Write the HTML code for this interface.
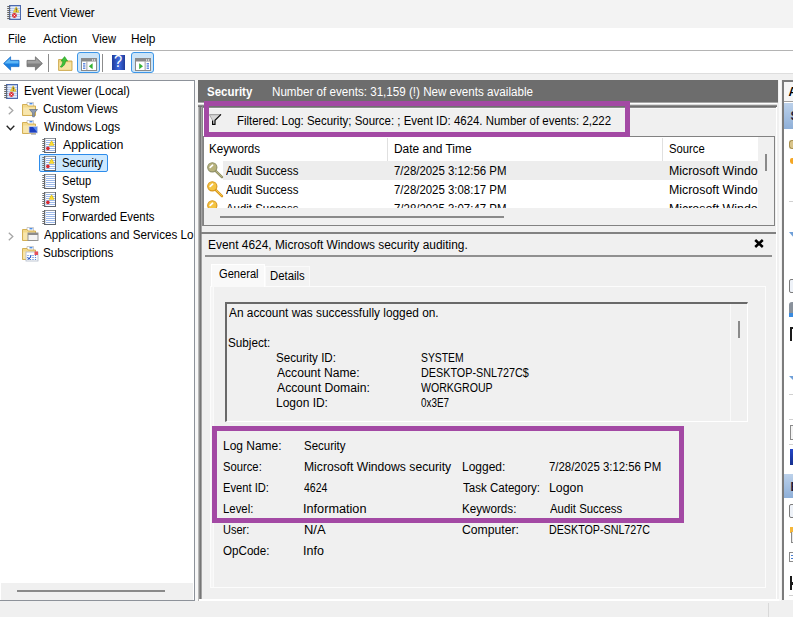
<!DOCTYPE html>
<html lang="en"><head><meta charset="utf-8"><title>Event Viewer</title>
<style>
html,body{margin:0;padding:0}
body{width:793px;height:617px;overflow:hidden;background:#f0f0f0}
#root{position:absolute;left:0;top:0;width:793px;height:617px;overflow:hidden;background:#f0f0f0;font-family:"Liberation Sans",sans-serif;font-size:12px;color:#000}
.a{position:absolute;box-sizing:border-box}
.t{position:absolute;white-space:pre;line-height:14px;height:14px;transform-origin:0 0}
svg{position:absolute;overflow:visible}
</style></head><body><div id="root">
<!-- title bar / menu / toolbar -->
<div class="a" style="left:0;top:0;width:793px;height:28px;background:#f3f3f3"></div>
<div class="a" style="left:0;top:28px;width:793px;height:45px;background:#fff"></div>
<div class="a" style="left:0;top:73px;width:793px;height:1px;background:#dedede"></div>
<div class="a" style="left:0;top:50px;width:793px;height:1px;background:#b4b4b4"></div>

<!-- tree panel -->
<div class="a" style="left:0;top:80px;width:195px;height:521px;background:#fff;border:1px solid #8d929a;border-left:none"></div>
<div class="a" style="left:195px;top:80px;width:3px;height:521px;background:#f7f7f7"></div>
<div class="a" style="left:1px;top:583px;width:192px;height:17px;background:#f0f0f0"></div>
<div class="a" style="left:17px;top:590px;width:148px;height:2px;background:#8a8a8a"></div>
<div class="a" style="left:39px;top:154px;width:69px;height:18px;background:#cce8ff;border:1px solid #2d8ceb;border-radius:2px"></div>

<!-- centre panel frame -->
<div class="a" style="left:198px;top:80px;width:580px;height:22px;background:#6d6d6d"></div>
<div class="a" style="left:198px;top:104px;width:1px;height:497px;background:#b8b8b8"></div>
<div class="a" style="left:199px;top:104px;width:1px;height:497px;background:#8e8e8e"></div>
<div class="a" style="left:200px;top:104px;width:1px;height:497px;background:#767676"></div>
<div class="a" style="left:201px;top:104px;width:1px;height:497px;background:#a4a4a4"></div>
<div class="a" style="left:199px;top:599px;width:580px;height:2px;background:#fff"></div>
<div class="a" style="left:776px;top:103px;width:1px;height:497px;background:#fff"></div>
<!-- filter bar frame -->
<div class="a" style="left:198px;top:102px;width:580px;height:1px;background:#a6a6a6"></div>
<div class="a" style="left:198px;top:103px;width:579px;height:1px;background:#fff"></div>
<div class="a" style="left:198px;top:104px;width:579px;height:1px;background:#dcdcdc"></div>
<div class="a" style="left:198px;top:105px;width:579px;height:1px;background:#8c8c8c"></div>
<div class="a" style="left:198px;top:106px;width:579px;height:1px;background:#707070"></div>
<div class="a" style="left:203px;top:107px;width:1px;height:29px;background:#fff"></div>
<div class="a" style="left:203px;top:107px;width:573px;height:1px;background:#8c8c8c"></div>
<div class="a" style="left:204px;top:108px;width:572px;height:1px;background:#f8f8f8"></div>
<div class="a" style="left:202px;top:105px;width:1px;height:121px;background:#8a8a8a"></div>
<!-- table -->
<div class="a" style="left:203px;top:136px;width:572px;height:90px;background:#f0f0f0;border:1px solid #828282;border-top:1px solid #828282"></div>
<div class="a" style="left:204px;top:137px;width:554px;height:71px;background:#fff"></div>
<div class="a" style="left:387px;top:138px;width:1px;height:23px;background:#e0e0e0"></div>
<div class="a" style="left:662px;top:138px;width:1px;height:23px;background:#e0e0e0"></div>
<div class="a" style="left:223px;top:161px;width:535px;height:19px;background:#ededed"></div>
<div class="a" style="left:764.6px;top:154px;width:2.7px;height:17px;background:#8a8a8a"></div>
<div class="a" style="left:220px;top:216px;width:284px;height:2px;background:#8a8a8a"></div>
<div class="a" style="left:0;top:0;width:758px;height:208px;overflow:hidden">
<span class="t" style="left:225.80px;top:164.3px;transform:scaleX(0.9518)">Audit Success</span>
<span class="t" style="left:394.33px;top:164.3px;transform:scaleX(0.9519)">7/28/2025 3:12:56 PM</span>
<span class="t" style="left:668.82px;top:164.3px;transform:scaleX(1.0307)">Microsoft Windo</span>
<span class="t" style="left:225.80px;top:183.1px;transform:scaleX(0.9518)">Audit Success</span>
<span class="t" style="left:394.33px;top:183.1px;transform:scaleX(0.9519)">7/28/2025 3:08:17 PM</span>
<span class="t" style="left:668.82px;top:183.1px;transform:scaleX(1.0307)">Microsoft Windo</span>
<span class="t" style="left:225.80px;top:201.9px;transform:scaleX(0.9518)">Audit Success</span>
<span class="t" style="left:394.33px;top:201.9px;transform:scaleX(0.9519)">7/28/2025 3:07:47 PM</span>
<span class="t" style="left:668.82px;top:201.9px;transform:scaleX(1.0307)">Microsoft Windo</span>
<svg style="left:207px;top:162px" width="16" height="17" viewBox="0 0 16 17"><path d="M8.6 8.8 L15 15.2" stroke="#8f9068" stroke-width="2.4" stroke-linecap="round"/><path d="M8.6 8.6 L14.8 14.8" stroke="#b8b27c" stroke-width="1" stroke-linecap="round"/><circle cx="5.3" cy="5.3" r="4.6" fill="#b8b27c" stroke="#8f9068" stroke-width="1.1"/><path d="M3.2 5.4 L5.6 3.2" stroke="#fff" stroke-width="1.7" stroke-linecap="round"/></svg><svg style="left:207px;top:181px" width="16" height="17" viewBox="0 0 16 17"><path d="M8.6 8.8 L15 15.2" stroke="#d8971c" stroke-width="2.4" stroke-linecap="round"/><path d="M8.6 8.6 L14.8 14.8" stroke="#f4c443" stroke-width="1" stroke-linecap="round"/><circle cx="5.3" cy="5.3" r="4.6" fill="#f4c443" stroke="#d8971c" stroke-width="1.1"/><path d="M3.2 5.4 L5.6 3.2" stroke="#fff" stroke-width="1.7" stroke-linecap="round"/></svg><svg style="left:207px;top:200px" width="16" height="17" viewBox="0 0 16 17"><path d="M8.6 8.8 L15 15.2" stroke="#d8971c" stroke-width="2.4" stroke-linecap="round"/><path d="M8.6 8.6 L14.8 14.8" stroke="#f4c443" stroke-width="1" stroke-linecap="round"/><circle cx="5.3" cy="5.3" r="4.6" fill="#f4c443" stroke="#d8971c" stroke-width="1.1"/><path d="M3.2 5.4 L5.6 3.2" stroke="#fff" stroke-width="1.7" stroke-linecap="round"/></svg>
</div>
<!-- purple frame 1 -->
<div class="a" style="left:204px;top:101px;width:426px;height:36px;border:5px solid #a349a4"></div>

<!-- detail panel -->
<div class="a" style="left:201px;top:232px;width:575px;height:2px;background:#828282"></div>
<div class="a" style="left:205px;top:255px;width:567px;height:2px;background:#909090"></div>
<!-- tabs -->
<div class="a" style="left:210px;top:286px;width:556px;height:302px;border:1px solid #fcfcfc;background:#f5f5f5"></div>
<div class="a" style="left:213px;top:287px;width:552px;height:300px;border-left:1px solid #fafafa;background:#f0f0f0"></div>
<div class="a" style="left:211px;top:264px;width:54px;height:23px;background:#f9f9f9;border:1px solid #fff;border-bottom:none"></div>
<div class="a" style="left:265px;top:266px;width:45px;height:20px;background:#f3f3f3;border:1px solid #fafafa;border-bottom:none"></div>
<!-- text box -->
<div class="a" style="left:225px;top:302px;width:523px;height:120px;border-top:2px solid #696969;border-left:2px solid #696969;border-right:1px solid #fff;border-bottom:1px solid #fff"></div>
<div class="a" style="left:730px;top:304px;width:1px;height:117px;background:#fafafa"></div>
<div class="a" style="left:738px;top:321px;width:2px;height:17px;background:#8a8a8a"></div>
<!-- purple frame 2 -->
<div class="a" style="left:211.5px;top:426px;width:472.5px;height:97px;border:5.4px solid #a349a4"></div>

<!-- right actions sliver -->
<div class="a" style="left:779px;top:80px;width:2px;height:521px;background:#fafafa"></div>
<div class="a" style="left:782px;top:80px;width:11px;height:520px;background:#fff;border-left:2px solid #7c7c7c;border-top:2px solid #7c7c7c"></div>
<div class="a" style="left:784px;top:82px;width:9px;height:20px;background:#f6f6f6;border-bottom:1px solid #a0a0a0"></div>
<div class="a" style="left:784px;top:103px;width:9px;height:26px;background:linear-gradient(#bcd1ea,#8eafd8)"></div>
<div class="a" style="left:784px;top:474px;width:9px;height:24px;background:linear-gradient(#bcd1ea,#8eafd8)"></div>
<span class="t" style="left:788.6px;top:85px;font-weight:700">Actions</span>
<span class="t" style="left:790.4px;top:109px;font-weight:700;color:#1a1a3a">Security</span>
<span class="t" style="left:790.6px;top:480px;font-weight:700;color:#1a1a3a">Event 4624, Microsoft Windows security auditing.</span>
<div class="a" style="left:789px;top:140px;width:4px;height:9px;background:#d9c48a;border:1px solid #a89050;border-right:none;border-radius:3px 0 0 3px"></div>
<div class="a" style="left:790px;top:158px;width:3px;height:6px;background:#f5a623;border-radius:2px 0 0 3px"></div>
<div class="a" style="left:789px;top:201px;width:4px;height:1px;background:#d0d0d0"></div>
<div class="a" style="left:789px;top:232px;width:0;height:0;border-left:5px solid transparent;border-right:5px solid transparent;border-top:6px solid #6f9fd8"></div>
<div class="a" style="left:789px;top:279px;width:6px;height:14px;border:1px solid #7c7c7c;border-radius:2px;background:#eef2f8"></div>
<div class="a" style="left:789px;top:302px;width:6px;height:12px;background:#8a929c;border-radius:3px 0 0 0"></div>
<div class="a" style="left:789px;top:313px;width:6px;height:4px;background:#3a8be0"></div>
<div class="a" style="left:790px;top:327px;width:2px;height:14px;background:#1a1a1a"></div>
<div class="a" style="left:791px;top:327px;width:2px;height:2px;background:#1a1a1a"></div>
<div class="a" style="left:789px;top:376px;width:0;height:0;border-left:5px solid transparent;border-right:5px solid transparent;border-top:5px solid #6f9fd8"></div>
<div class="a" style="left:789px;top:394px;width:4px;height:1px;background:#d0d0d0"></div>
<div class="a" style="left:789px;top:419px;width:4px;height:1px;background:#d0d0d0"></div>
<div class="a" style="left:789px;top:444px;width:4px;height:1px;background:#d0d0d0"></div>
<div class="a" style="left:790px;top:425px;width:6px;height:15px;border:1px solid #8a8a8a;background:#f4f4f4"></div>
<div class="a" style="left:790px;top:449px;width:3px;height:16px;background:linear-gradient(#2446c8,#16308e)"></div>
<div class="a" style="left:789px;top:504px;width:6px;height:14px;border:1px solid #7c7c7c;border-radius:2px;background:#eef2f8"></div>
<div class="a" style="left:790px;top:527px;width:3px;height:6px;background:#f5b73a"></div>
<div class="a" style="left:791px;top:532px;width:2px;height:11px;background:#e8e8e8;border-left:1px solid #8a8a8a;border-bottom:1px solid #8a8a8a"></div>
<div class="a" style="left:789px;top:552px;width:6px;height:10px;border:1px solid #8a8a8a;background:#fff"></div>
<div class="a" style="left:791px;top:555px;width:2px;height:1px;background:#4a7fd0"></div>
<div class="a" style="left:791px;top:558px;width:2px;height:1px;background:#4a7fd0"></div>
<div class="a" style="left:790px;top:576px;width:2px;height:14px;background:#1a1a1a"></div>
<div class="a" style="left:792px;top:582px;width:1px;height:3px;background:#1a1a1a"></div>
<div class="a" style="left:789px;top:595px;width:4px;height:1px;background:#d0d0d0"></div>
<div class="a" style="left:782px;top:600px;width:11px;height:1px;background:#f0f0f0"></div>

<!-- status bar -->
<div class="a" style="left:768px;top:603px;width:1px;height:14px;background:#d9d9d9"></div>

<svg style="left:7px;top:5px" width="14" height="15" viewBox="0 0 14 15"><rect x="2.5" y="0.5" width="11" height="14" fill="#b9cbee" stroke="#4c69ad" stroke-width="1"/><rect x="3.5" y="2" width="9.5" height="1" fill="#e4ecfa"/><rect x="3.5" y="4" width="9.5" height="1" fill="#e4ecfa"/><rect x="3.5" y="6" width="9.5" height="1" fill="#e4ecfa"/><rect x="3.5" y="8" width="9.5" height="1" fill="#e4ecfa"/><rect x="3.5" y="10" width="9.5" height="1" fill="#e4ecfa"/><rect x="3.5" y="12" width="9.5" height="1" fill="#e4ecfa"/><rect x="0.2" y="1" width="3.2" height="1.1" fill="#666"/><rect x="0.2" y="3" width="3.2" height="1.1" fill="#666"/><rect x="0.2" y="5" width="3.2" height="1.1" fill="#666"/><rect x="0.2" y="7" width="3.2" height="1.1" fill="#666"/><rect x="0.2" y="9" width="3.2" height="1.1" fill="#666"/><rect x="0.2" y="11" width="3.2" height="1.1" fill="#666"/><rect x="0.2" y="13" width="3.2" height="1.1" fill="#666"/><polygon points="9.2,1.8 12,7.2 6.4,7.2" fill="#ffd83a" stroke="#c9a800" stroke-width="0.5"/><rect x="8.8" y="3.4" width="0.9" height="2.1" fill="#333"/><rect x="8.8" y="5.9" width="0.9" height="0.8" fill="#333"/><circle cx="7.4" cy="10.5" r="2.4" fill="#d8282f"/><path d="M6.5 9.6 L8.3 11.4 M8.3 9.6 L6.5 11.4" stroke="#fff" stroke-width="0.8"/></svg><svg style="left:3px;top:56px" width="17" height="15" viewBox="0 0 17 15"><path d="M0.6 7.5 L7.6 0.8 V4.4 H16 V10.6 H7.6 V14.2 Z" fill="#1a7fe0" stroke="#1a6fc8" stroke-width="0.8"/><path d="M1.6 7.2 L7.2 1.9 V4.9 H15.5 V7.6 H1.6 Z" fill="#5db6f6"/></svg><svg style="left:25.5px;top:56px" width="17" height="15" viewBox="0 0 17 15"><path d="M16.4 7.5 L9.4 0.8 V4.4 H1 V10.6 H9.4 V14.2 Z" fill="#808080" stroke="#6e6e6e" stroke-width="0.8"/><path d="M15.4 7.2 L9.8 1.9 V4.9 H1.5 V7.6 H15.4 Z" fill="#a2a2a2"/></svg><svg style="left:58px;top:56px" width="15" height="15" viewBox="0 0 15 15"><path d="M0.6 3.5 H5 L6.3 5 H14 V14.4 H0.6 Z" fill="#f1d480" stroke="#c9a548" stroke-width="0.9"/><path d="M1.4 6.4 H13.2 V13.7 H1.4 Z" fill="#f7e3a4"/><path d="M2.2 10.8 C3.6 9.6 4.6 7.6 4.8 5 L3 5 L6.6 0.6 L9.6 5 L7.6 5 C7.4 8.2 5.6 10.2 3.6 11.2 Z" fill="#3fc03a" stroke="#239a20" stroke-width="0.6"/></svg><div class="a" style="left:77px;top:52px;width:23px;height:21px;background:#cce4f7;border:1px solid #3c96e8;border-radius:3px"></div><div class="a" style="left:131px;top:52px;width:23px;height:21px;background:#cce4f7;border:1px solid #3c96e8;border-radius:3px"></div><svg style="left:80.5px;top:58px" width="16" height="13" viewBox="0 0 16 13"><rect x="0.5" y="0.5" width="15" height="12" fill="#fff" stroke="#8a8a8a"/><rect x="0.5" y="0.5" width="15" height="3" fill="#8a8a8a"/><rect x="11" y="1.4" width="1.2" height="1.2" fill="#fff"/><rect x="13" y="1.4" width="1.2" height="1.2" fill="#fff"/><rect x="5.5" y="3.5" width="0.8" height="9" fill="#8a8a8a"/><rect x="2" y="5.2" width="2.4" height="1.2" fill="#3f6fd8"/><rect x="2" y="7.4" width="2.4" height="1.2" fill="#3f6fd8"/><rect x="2" y="9.6" width="2.4" height="1.2" fill="#3f6fd8"/><path d="M11.6 5.2 V11.2 L7.8 8.2 Z" fill="#34b233"/></svg><svg style="left:134.5px;top:58px" width="16" height="13" viewBox="0 0 16 13"><rect x="0.5" y="0.5" width="15" height="12" fill="#fff" stroke="#8a8a8a"/><rect x="0.5" y="0.5" width="15" height="3" fill="#8a8a8a"/><rect x="11" y="1.4" width="1.2" height="1.2" fill="#fff"/><rect x="13" y="1.4" width="1.2" height="1.2" fill="#fff"/><rect x="9.7" y="3.5" width="0.8" height="9" fill="#8a8a8a"/><rect x="11.6" y="5.2" width="2.4" height="1.2" fill="#3f6fd8"/><rect x="11.6" y="7.4" width="2.4" height="1.2" fill="#3f6fd8"/><rect x="11.6" y="9.6" width="2.4" height="1.2" fill="#3f6fd8"/><path d="M4.2 5.2 V11.2 L8 8.2 Z" fill="#34b233"/></svg><div class="a" style="left:48px;top:54px;width:1px;height:18px;background:#8c8c8c"></div><div class="a" style="left:102px;top:54px;width:1px;height:18px;background:#8c8c8c"></div><div class="a" style="left:112px;top:55px;width:13px;height:15px;background:linear-gradient(90deg,#1f3a9a,#3f6be0 55%,#1f3a9a)"></div><span class="t" style="left:114.4px;top:55px;font-weight:400;color:#fff;font-size:16px;transform:scaleX(0.92)">?</span><svg style="left:4px;top:84px" width="14" height="15" viewBox="0 0 14 15"><rect x="2.5" y="0.5" width="11" height="14" fill="#b9cbee" stroke="#4c69ad" stroke-width="1"/><rect x="3.5" y="2" width="9.5" height="1" fill="#e4ecfa"/><rect x="3.5" y="4" width="9.5" height="1" fill="#e4ecfa"/><rect x="3.5" y="6" width="9.5" height="1" fill="#e4ecfa"/><rect x="3.5" y="8" width="9.5" height="1" fill="#e4ecfa"/><rect x="3.5" y="10" width="9.5" height="1" fill="#e4ecfa"/><rect x="3.5" y="12" width="9.5" height="1" fill="#e4ecfa"/><rect x="0.2" y="1" width="3.2" height="1.1" fill="#666"/><rect x="0.2" y="3" width="3.2" height="1.1" fill="#666"/><rect x="0.2" y="5" width="3.2" height="1.1" fill="#666"/><rect x="0.2" y="7" width="3.2" height="1.1" fill="#666"/><rect x="0.2" y="9" width="3.2" height="1.1" fill="#666"/><rect x="0.2" y="11" width="3.2" height="1.1" fill="#666"/><rect x="0.2" y="13" width="3.2" height="1.1" fill="#666"/><polygon points="9.2,1.8 12,7.2 6.4,7.2" fill="#ffd83a" stroke="#c9a800" stroke-width="0.5"/><rect x="8.8" y="3.4" width="0.9" height="2.1" fill="#333"/><rect x="8.8" y="5.9" width="0.9" height="0.8" fill="#333"/><circle cx="7.4" cy="10.5" r="2.4" fill="#d8282f"/><path d="M6.5 9.6 L8.3 11.4 M8.3 9.6 L6.5 11.4" stroke="#fff" stroke-width="0.8"/></svg><svg style="left:7.8px;top:106.2px" width="6" height="9" viewBox="0 0 6 9"><path d="M0.8 0.8 L4.8 4.5 L0.8 8.2" fill="none" stroke="#a6a6a6" stroke-width="1.3"/></svg><svg style="left:6.2px;top:125px" width="9" height="6" viewBox="0 0 9 6"><path d="M0.7 0.8 L4.5 4.7 L8.3 0.8" fill="none" stroke="#262626" stroke-width="1.4"/></svg><svg style="left:22px;top:101px" width="17" height="17" viewBox="0 0 17 17"><path d="M5 1.5 H11.5 V6 H5 Z" fill="#fff" stroke="#b8b8b8" stroke-width="0.7"/><rect x="7.5" y="2" width="3" height="1.4" fill="#4d8ee8"/><path d="M0.5 3.5 H5 L6.2 5 H13.5 V14.5 H0.5 Z" fill="#f3d98b" stroke="#cfa94a" stroke-width="0.9"/><path d="M1.2 6.5 H12.8 V13.8 H1.2 Z" fill="#f8e6ad"/><path d="M7.5 8.5 H15.5 L12.4 12 V15.8 H10.6 V12 Z" fill="#8e9bb0" stroke="#5d6b84" stroke-width="0.7"/></svg><svg style="left:22px;top:119px" width="17" height="17" viewBox="0 0 17 17"><path d="M5 1.5 H11.5 V6 H5 Z" fill="#fff" stroke="#b8b8b8" stroke-width="0.7"/><rect x="7.5" y="2" width="3" height="1.4" fill="#4d8ee8"/><path d="M0.5 3.5 H5 L6.2 5 H13.5 V14.5 H0.5 Z" fill="#f3d98b" stroke="#cfa94a" stroke-width="0.9"/><path d="M1.2 6.5 H12.8 V13.8 H1.2 Z" fill="#f8e6ad"/><rect x="7" y="7.5" width="8.5" height="6.5" fill="#1d3fc0" stroke="#cfd6e6" stroke-width="0.8"/><rect x="9" y="14.6" width="5" height="1" fill="#9a9a9a"/><path d="M11 8 H15 V13 Z" fill="#5b8cf0"/></svg><svg style="left:42px;top:138px" width="14" height="15" viewBox="0 0 14 15"><rect x="2.5" y="0.5" width="11" height="14" fill="#fff" stroke="#5d646e" stroke-width="1"/><rect x="3" y="0" width="10" height="1" fill="#8e949c"/><rect x="3.6" y="2" width="9.4" height="1" fill="#9db9ea"/><rect x="3.6" y="4" width="9.4" height="1" fill="#9db9ea"/><rect x="3.6" y="6" width="9.4" height="1" fill="#9db9ea"/><rect x="3.6" y="8" width="9.4" height="1" fill="#9db9ea"/><rect x="3.6" y="10" width="9.4" height="1" fill="#9db9ea"/><rect x="3.6" y="12" width="9.4" height="1" fill="#9db9ea"/><rect x="0.3" y="1" width="3" height="1" fill="#707070"/><rect x="0.3" y="3" width="3" height="1" fill="#707070"/><rect x="0.3" y="5" width="3" height="1" fill="#707070"/><rect x="0.3" y="7" width="3" height="1" fill="#707070"/><rect x="0.3" y="9" width="3" height="1" fill="#707070"/><rect x="0.3" y="11" width="3" height="1" fill="#707070"/><rect x="0.3" y="13" width="3" height="1" fill="#707070"/><polygon points="9.6,2.8 12,7.3 7.2,7.3" fill="#ffe033" stroke="#d9b400" stroke-width="0.6"/><circle cx="5.9" cy="10.4" r="1.8" fill="#d8282f"/></svg><svg style="left:42px;top:156px" width="14" height="15" viewBox="0 0 14 15"><rect x="2.5" y="0.5" width="11" height="14" fill="#fff" stroke="#5d646e" stroke-width="1"/><rect x="3" y="0" width="10" height="1" fill="#8e949c"/><rect x="3.6" y="2" width="9.4" height="1" fill="#9db9ea"/><rect x="3.6" y="4" width="9.4" height="1" fill="#9db9ea"/><rect x="3.6" y="6" width="9.4" height="1" fill="#9db9ea"/><rect x="3.6" y="8" width="9.4" height="1" fill="#9db9ea"/><rect x="3.6" y="10" width="9.4" height="1" fill="#9db9ea"/><rect x="3.6" y="12" width="9.4" height="1" fill="#9db9ea"/><rect x="0.3" y="1" width="3" height="1" fill="#707070"/><rect x="0.3" y="3" width="3" height="1" fill="#707070"/><rect x="0.3" y="5" width="3" height="1" fill="#707070"/><rect x="0.3" y="7" width="3" height="1" fill="#707070"/><rect x="0.3" y="9" width="3" height="1" fill="#707070"/><rect x="0.3" y="11" width="3" height="1" fill="#707070"/><rect x="0.3" y="13" width="3" height="1" fill="#707070"/><polygon points="9.6,2.8 12,7.3 7.2,7.3" fill="#ffe033" stroke="#d9b400" stroke-width="0.6"/><circle cx="5.9" cy="10.4" r="1.8" fill="#d8282f"/></svg><svg style="left:42px;top:174px" width="14" height="15" viewBox="0 0 14 15"><rect x="2.5" y="0.5" width="11" height="14" fill="#fff" stroke="#5d646e" stroke-width="1"/><rect x="3" y="0" width="10" height="1" fill="#8e949c"/><rect x="3.6" y="2" width="9.4" height="1" fill="#9db9ea"/><rect x="3.6" y="4" width="9.4" height="1" fill="#9db9ea"/><rect x="3.6" y="6" width="9.4" height="1" fill="#9db9ea"/><rect x="3.6" y="8" width="9.4" height="1" fill="#9db9ea"/><rect x="3.6" y="10" width="9.4" height="1" fill="#9db9ea"/><rect x="3.6" y="12" width="9.4" height="1" fill="#9db9ea"/><rect x="0.3" y="1" width="3" height="1" fill="#707070"/><rect x="0.3" y="3" width="3" height="1" fill="#707070"/><rect x="0.3" y="5" width="3" height="1" fill="#707070"/><rect x="0.3" y="7" width="3" height="1" fill="#707070"/><rect x="0.3" y="9" width="3" height="1" fill="#707070"/><rect x="0.3" y="11" width="3" height="1" fill="#707070"/><rect x="0.3" y="13" width="3" height="1" fill="#707070"/></svg><svg style="left:42px;top:192px" width="14" height="15" viewBox="0 0 14 15"><rect x="2.5" y="0.5" width="11" height="14" fill="#fff" stroke="#5d646e" stroke-width="1"/><rect x="3" y="0" width="10" height="1" fill="#8e949c"/><rect x="3.6" y="2" width="9.4" height="1" fill="#9db9ea"/><rect x="3.6" y="4" width="9.4" height="1" fill="#9db9ea"/><rect x="3.6" y="6" width="9.4" height="1" fill="#9db9ea"/><rect x="3.6" y="8" width="9.4" height="1" fill="#9db9ea"/><rect x="3.6" y="10" width="9.4" height="1" fill="#9db9ea"/><rect x="3.6" y="12" width="9.4" height="1" fill="#9db9ea"/><rect x="0.3" y="1" width="3" height="1" fill="#707070"/><rect x="0.3" y="3" width="3" height="1" fill="#707070"/><rect x="0.3" y="5" width="3" height="1" fill="#707070"/><rect x="0.3" y="7" width="3" height="1" fill="#707070"/><rect x="0.3" y="9" width="3" height="1" fill="#707070"/><rect x="0.3" y="11" width="3" height="1" fill="#707070"/><rect x="0.3" y="13" width="3" height="1" fill="#707070"/><polygon points="9.6,2.8 12,7.3 7.2,7.3" fill="#ffe033" stroke="#d9b400" stroke-width="0.6"/><circle cx="5.9" cy="10.4" r="1.8" fill="#d8282f"/></svg><svg style="left:42px;top:210px" width="14" height="15" viewBox="0 0 14 15"><rect x="2.5" y="0.5" width="11" height="14" fill="#fff" stroke="#5d646e" stroke-width="1"/><rect x="3" y="0" width="10" height="1" fill="#8e949c"/><rect x="3.6" y="2" width="9.4" height="1" fill="#9db9ea"/><rect x="3.6" y="4" width="9.4" height="1" fill="#9db9ea"/><rect x="3.6" y="6" width="9.4" height="1" fill="#9db9ea"/><rect x="3.6" y="8" width="9.4" height="1" fill="#9db9ea"/><rect x="3.6" y="10" width="9.4" height="1" fill="#9db9ea"/><rect x="3.6" y="12" width="9.4" height="1" fill="#9db9ea"/><rect x="0.3" y="1" width="3" height="1" fill="#707070"/><rect x="0.3" y="3" width="3" height="1" fill="#707070"/><rect x="0.3" y="5" width="3" height="1" fill="#707070"/><rect x="0.3" y="7" width="3" height="1" fill="#707070"/><rect x="0.3" y="9" width="3" height="1" fill="#707070"/><rect x="0.3" y="11" width="3" height="1" fill="#707070"/><rect x="0.3" y="13" width="3" height="1" fill="#707070"/></svg><svg style="left:7.8px;top:232px" width="6" height="9" viewBox="0 0 6 9"><path d="M0.8 0.8 L4.8 4.5 L0.8 8.2" fill="none" stroke="#a6a6a6" stroke-width="1.3"/></svg><svg style="left:22px;top:226px" width="17" height="17" viewBox="0 0 17 17"><path d="M5 1.5 H11.5 V6 H5 Z" fill="#fff" stroke="#b8b8b8" stroke-width="0.7"/><rect x="7.5" y="2" width="3" height="1.4" fill="#4d8ee8"/><path d="M0.5 3.5 H5 L6.2 5 H13.5 V14.5 H0.5 Z" fill="#f3d98b" stroke="#cfa94a" stroke-width="0.9"/><path d="M1.2 6.5 H12.8 V13.8 H1.2 Z" fill="#f8e6ad"/><rect x="6" y="7" width="10" height="7.5" fill="#f4f4f4" stroke="#8c8c8c" stroke-width="0.9"/><rect x="6" y="7" width="10" height="2" fill="#8c8c8c"/></svg><svg style="left:22px;top:244.5px" width="17" height="17" viewBox="0 0 17 17"><path d="M5 1.5 H11.5 V6 H5 Z" fill="#fff" stroke="#b8b8b8" stroke-width="0.7"/><rect x="7.5" y="2" width="3" height="1.4" fill="#4d8ee8"/><path d="M0.5 3.5 H5 L6.2 5 H13.5 V14.5 H0.5 Z" fill="#f3d98b" stroke="#cfa94a" stroke-width="0.9"/><path d="M1.2 6.5 H12.8 V13.8 H1.2 Z" fill="#f8e6ad"/><rect x="4" y="7" width="12" height="9" fill="#fff" stroke="#b0b8c8" stroke-width="0.8"/><rect x="12.5" y="6.5" width="3.5" height="3.5" fill="#e8505a"/><rect x="5.4" y="10.0" width="1.2" height="1" fill="#5a86d8"/><rect x="5.4" y="12.0" width="1.2" height="1" fill="#5a86d8"/><rect x="5.4" y="14.0" width="1.2" height="1" fill="#5a86d8"/><rect x="7.9" y="10.0" width="1.2" height="1" fill="#5a86d8"/><rect x="7.9" y="12.0" width="1.2" height="1" fill="#5a86d8"/><rect x="7.9" y="14.0" width="1.2" height="1" fill="#5a86d8"/><rect x="10.4" y="10.0" width="1.2" height="1" fill="#5a86d8"/><rect x="10.4" y="12.0" width="1.2" height="1" fill="#5a86d8"/><rect x="10.4" y="14.0" width="1.2" height="1" fill="#5a86d8"/><rect x="12.9" y="10.0" width="1.2" height="1" fill="#5a86d8"/><rect x="12.9" y="12.0" width="1.2" height="1" fill="#5a86d8"/><rect x="12.9" y="14.0" width="1.2" height="1" fill="#5a86d8"/><path d="M5.5 12.5 L7 14.3 L9.2 10.5" stroke="#2050c0" stroke-width="1" fill="none"/></svg><svg style="left:209px;top:114.3px" width="13" height="11" viewBox="0 0 13 11"><path d="M0.4 0.7 H11.8 L5.9 6.3 V10.4 H3.5 V6.3 Z" fill="#d6d6d6"/><path d="M0.4 0.7 H11.8" stroke="#8a8a8a" stroke-width="0.9"/><path d="M0.4 0.7 L3.6 6.3" stroke="#9a9a9a" stroke-width="0.8"/><path d="M12 0.4 L6 6.3 V10.3 H3.6 V6.4" stroke="#0a0a0a" stroke-width="1.2" fill="none" stroke-linejoin="miter"/></svg><svg style="left:754px;top:239.3px" width="10" height="9" viewBox="0 0 10 9"><path d="M1.2 1 L8.8 8 M8.8 1 L1.2 8" stroke="#000" stroke-width="2.5"/></svg>

<span class="t" style="left:27.29px;top:5.8px;transform:scaleX(0.9603)">Event Viewer</span>
<span class="t" style="left:8.12px;top:32.2px;transform:scaleX(0.9244)">File</span>
<span class="t" style="left:42.80px;top:32.2px;transform:scaleX(1.0245)">Action</span>
<span class="t" style="left:91.65px;top:32.2px;transform:scaleX(0.9341)">View</span>
<span class="t" style="left:130.86px;top:32.2px;transform:scaleX(0.9892)">Help</span>
<span class="t" style="left:24.29px;top:84.3px;transform:scaleX(0.9577)">Event Viewer (Local)</span>
<span class="t" style="left:43.21px;top:102.3px;transform:scaleX(0.9781)">Custom Views</span>
<span class="t" style="left:43.75px;top:120.3px;transform:scaleX(0.9768)">Windows Logs</span>
<span class="t" style="left:62.90px;top:138.3px;transform:scaleX(1.0302)">Application</span>
<span class="t" style="left:62.38px;top:156.3px;transform:scaleX(0.9416)">Security</span>
<span class="t" style="left:62.39px;top:174.3px;transform:scaleX(0.9292)">Setup</span>
<span class="t" style="left:62.38px;top:192.3px;transform:scaleX(0.9444)">System</span>
<span class="t" style="left:62.00px;top:210.3px;transform:scaleX(0.9505)">Forwarded Events</span>
<span class="t" style="left:43.80px;top:228.3px;transform:scaleX(0.9701)">Applications and Services Lo</span>
<span class="t" style="left:43.26px;top:246.3px;transform:scaleX(0.9775)">Subscriptions</span>
<span class="t" style="left:207.07px;top:85.3px;transform:scaleX(0.9563);font-weight:700;color:#fff">Security</span>
<span class="t" style="left:272.08px;top:85.3px;transform:scaleX(0.9683);color:#fff">Number of events: 31,159 (!) New events available</span>
<span class="t" style="left:236.89px;top:114.1px;transform:scaleX(0.9537)">Filtered: Log: Security; Source: ; Event ID: 4624. Number of events: 2,222</span>
<span class="t" style="left:208.88px;top:141.6px;transform:scaleX(0.9698)">Keywords</span>
<span class="t" style="left:393.96px;top:141.6px;transform:scaleX(0.9941)">Date and Time</span>
<span class="t" style="left:669.28px;top:141.6px;transform:scaleX(0.9391)">Source</span>
<span class="t" style="left:208.06px;top:237.7px;transform:scaleX(0.9933)">Event 4624, Microsoft Windows security auditing.</span>
<span class="t" style="left:218.54px;top:267.3px;transform:scaleX(0.9262)">General</span>
<span class="t" style="left:270.10px;top:268.5px;transform:scaleX(0.9448)">Details</span>
<span class="t" style="left:228.80px;top:305.9px;transform:scaleX(0.9884)">An account was successfully logged on.</span>
<span class="t" style="left:228.16px;top:335.9px;transform:scaleX(0.9772)">Subject:</span>
<span class="t" style="left:276.07px;top:350.9px;transform:scaleX(0.9669)">Security ID:</span>
<span class="t" style="left:276.60px;top:366.0px;transform:scaleX(1.0080)">Account Name:</span>
<span class="t" style="left:276.60px;top:381.1px;transform:scaleX(1.0155)">Account Domain:</span>
<span class="t" style="left:275.65px;top:396.2px;transform:scaleX(0.9980)">Logon ID:</span>
<span class="t" style="left:420.92px;top:350.9px;transform:scaleX(0.8640)">SYSTEM</span>
<span class="t" style="left:420.55px;top:366.0px;transform:scaleX(0.8997)">DESKTOP-SNL727C$</span>
<span class="t" style="left:421.36px;top:381.1px;transform:scaleX(0.8798)">WORKGROUP</span>
<span class="t" style="left:421.03px;top:396.2px;transform:scaleX(0.8212)">0x3E7</span>
<span class="t" style="left:222.85px;top:438.9px;transform:scaleX(0.9974)">Log Name:</span>
<span class="t" style="left:304.07px;top:438.9px;transform:scaleX(0.9579)">Security</span>
<span class="t" style="left:223.28px;top:459.8px;transform:scaleX(0.9370)">Source:</span>
<span class="t" style="left:303.64px;top:459.8px;transform:scaleX(1.0125)">Microsoft Windows security</span>
<span class="t" style="left:222.92px;top:480.8px;transform:scaleX(0.9302)">Event ID:</span>
<span class="t" style="left:304.38px;top:480.8px;transform:scaleX(0.8736)">4624</span>
<span class="t" style="left:222.90px;top:501.8px;transform:scaleX(0.9467)">Level:</span>
<span class="t" style="left:303.44px;top:501.8px;transform:scaleX(1.0576)">Information</span>
<span class="t" style="left:222.97px;top:522.8px;transform:scaleX(0.9176)">User:</span>
<span class="t" style="left:303.57px;top:522.8px;transform:scaleX(1.0814)">N/A</span>
<span class="t" style="left:223.27px;top:543.8px;transform:scaleX(0.9677)">OpCode:</span>
<span class="t" style="left:303.46px;top:543.8px;transform:scaleX(1.0407)">Info</span>
<span class="t" style="left:462.05px;top:459.8px;transform:scaleX(0.9988)">Logged:</span>
<span class="t" style="left:549.13px;top:459.8px;transform:scaleX(0.9502)">7/28/2025 3:12:56 PM</span>
<span class="t" style="left:462.76px;top:480.8px;transform:scaleX(0.9619)">Task Category:</span>
<span class="t" style="left:548.72px;top:480.8px;transform:scaleX(1.0269)">Logon</span>
<span class="t" style="left:462.08px;top:501.8px;transform:scaleX(0.9704)">Keywords:</span>
<span class="t" style="left:549.70px;top:501.8px;transform:scaleX(0.9504)">Audit Success</span>
<span class="t" style="left:462.39px;top:522.8px;transform:scaleX(1.0156)">Computer:</span>
<span class="t" style="left:548.85px;top:522.8px;transform:scaleX(0.8922)">DESKTOP-SNL727C</span>
</div></body></html>
